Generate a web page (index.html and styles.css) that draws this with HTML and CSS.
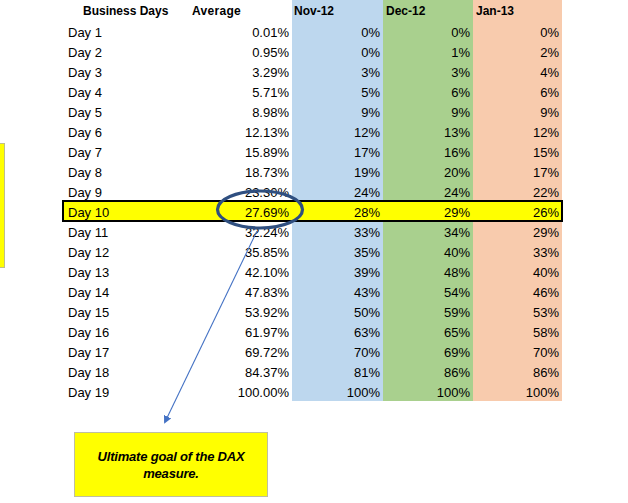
FILE: index.html
```html
<!DOCTYPE html>
<html>
<head>
<meta charset="utf-8">
<link rel="stylesheet" href="styles.css">
</head>
<body>
<div class="sheet">
  <div class="table">
    <div class="row head">
      <div class="c a">Business Days</div>
      <div class="c b">Average</div>
      <div class="c nov">Nov-12</div>
      <div class="c dec">Dec-12</div>
      <div class="c jan">Jan-13</div>
    </div>
    <div class="row"><div class="c a">Day 1</div><div class="c b">0.01%</div><div class="c nov">0%</div><div class="c dec">0%</div><div class="c jan">0%</div></div>
    <div class="row"><div class="c a">Day 2</div><div class="c b">0.95%</div><div class="c nov">0%</div><div class="c dec">1%</div><div class="c jan">2%</div></div>
    <div class="row"><div class="c a">Day 3</div><div class="c b">3.29%</div><div class="c nov">3%</div><div class="c dec">3%</div><div class="c jan">4%</div></div>
    <div class="row"><div class="c a">Day 4</div><div class="c b">5.71%</div><div class="c nov">5%</div><div class="c dec">6%</div><div class="c jan">6%</div></div>
    <div class="row"><div class="c a">Day 5</div><div class="c b">8.98%</div><div class="c nov">9%</div><div class="c dec">9%</div><div class="c jan">9%</div></div>
    <div class="row"><div class="c a">Day 6</div><div class="c b">12.13%</div><div class="c nov">12%</div><div class="c dec">13%</div><div class="c jan">12%</div></div>
    <div class="row"><div class="c a">Day 7</div><div class="c b">15.89%</div><div class="c nov">17%</div><div class="c dec">16%</div><div class="c jan">15%</div></div>
    <div class="row"><div class="c a">Day 8</div><div class="c b">18.73%</div><div class="c nov">19%</div><div class="c dec">20%</div><div class="c jan">17%</div></div>
    <div class="row"><div class="c a">Day 9</div><div class="c b">23.30%</div><div class="c nov">24%</div><div class="c dec">24%</div><div class="c jan">22%</div></div>
    <div class="row hl"><div class="c a">Day 10</div><div class="c b">27.69%</div><div class="c nov">28%</div><div class="c dec">29%</div><div class="c jan">26%</div></div>
    <div class="row"><div class="c a">Day 11</div><div class="c b">32.24%</div><div class="c nov">33%</div><div class="c dec">34%</div><div class="c jan">29%</div></div>
    <div class="row"><div class="c a">Day 12</div><div class="c b">35.85%</div><div class="c nov">35%</div><div class="c dec">40%</div><div class="c jan">33%</div></div>
    <div class="row"><div class="c a">Day 13</div><div class="c b">42.10%</div><div class="c nov">39%</div><div class="c dec">48%</div><div class="c jan">40%</div></div>
    <div class="row"><div class="c a">Day 14</div><div class="c b">47.83%</div><div class="c nov">43%</div><div class="c dec">54%</div><div class="c jan">46%</div></div>
    <div class="row"><div class="c a">Day 15</div><div class="c b">53.92%</div><div class="c nov">50%</div><div class="c dec">59%</div><div class="c jan">53%</div></div>
    <div class="row"><div class="c a">Day 16</div><div class="c b">61.97%</div><div class="c nov">63%</div><div class="c dec">65%</div><div class="c jan">58%</div></div>
    <div class="row"><div class="c a">Day 17</div><div class="c b">69.72%</div><div class="c nov">70%</div><div class="c dec">69%</div><div class="c jan">70%</div></div>
    <div class="row"><div class="c a">Day 18</div><div class="c b">84.37%</div><div class="c nov">81%</div><div class="c dec">86%</div><div class="c jan">86%</div></div>
    <div class="row"><div class="c a">Day 19</div><div class="c b">100.00%</div><div class="c nov">100%</div><div class="c dec">100%</div><div class="c jan">100%</div></div>
  </div>

  <div class="side-note"></div>

  <svg class="overlay" width="628" height="503" viewBox="0 0 628 503">
    <defs>
      <marker id="ah" markerWidth="8" markerHeight="8" refX="6" refY="4" orient="auto" markerUnits="userSpaceOnUse">
        <path d="M0,0 L8,4 L0,8 Z" fill="#4472C4"/>
      </marker>
    </defs>
    <line x1="257" y1="231" x2="165" y2="422" stroke="#4472C4" stroke-width="1.1" marker-end="url(#ah)"/>
    <ellipse cx="260" cy="209.5" rx="42.5" ry="18.5" fill="none" stroke="#2F4F80" stroke-width="3.2"/>
  </svg>

  <div class="callout">
    <p>Ultimate goal of the DAX<br>measure.</p>
  </div>
</div>
</body>
</html>
```
FILE: styles.css
```css
html, body {
  margin: 0;
  padding: 0;
  background: #ffffff;
}

.sheet {
  position: relative;
  width: 628px;
  height: 503px;
  overflow: hidden;
  font-family: "Liberation Sans", Arial, sans-serif;
  font-size: 13px;
  color: #000;
}

.table {
  display: flex;
  flex-direction: column;
  margin-left: 63px;
  width: 499px;
}

.row {
  display: grid;
  grid-template-columns: 125px 104px 91px 90px 89px;
  height: 20px;
}

.row.head {
  height: 21px;
  font-weight: bold;
  font-size: 12px;
}

.c {
  display: flex;
  align-items: center;
  justify-content: flex-end;
  padding-right: 3px;
  padding-top: 2px;
  white-space: nowrap;
}

.c.a {
  justify-content: flex-start;
  padding-left: 5px;
}

.nov { background: #BDD7EE; }
.dec { background: #A9D08E; }
.jan { background: #F8CBAD; }

.head .c {
  justify-content: flex-start;
  padding-top: 0;
}
.head .a { padding-left: 20px; }
.head .b { padding-left: 4px; letter-spacing: 0.3px; }
.head .nov { padding-left: 2px; }
.head .dec { padding-left: 3px; }
.head .jan { padding-left: 3px; }

.row.hl {
  position: relative;
  z-index: 1;
  outline: 2px solid #000;
  outline-offset: -1px;
}
.row.hl .c {
  background: #FFFF00;
}

.side-note {
  position: absolute;
  left: -10px;
  top: 143px;
  width: 13px;
  height: 123px;
  background: #FFFF00;
  border: 1px solid #BFBF8C;
}

.overlay {
  position: absolute;
  left: 0;
  top: 0;
  z-index: 2;
  pointer-events: none;
}

.callout {
  position: absolute;
  left: 74px;
  top: 432px;
  width: 192px;
  height: 63px;
  background: #FFFF00;
  border: 1px solid #BFBFA0;
  display: flex;
  align-items: center;
  justify-content: center;
}

.callout p {
  margin: 0;
  text-align: center;
  font-weight: bold;
  font-style: italic;
  font-size: 13px;
  line-height: 17px;
  letter-spacing: -0.2px;
}
```
